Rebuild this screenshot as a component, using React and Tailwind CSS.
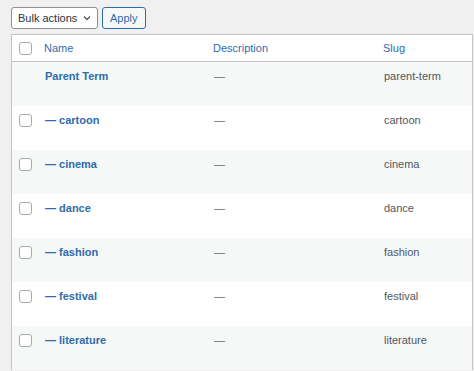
import React from "react";

const rows = [
  { name: "Parent Term", slug: "parent-term", parent: true },
  { name: "— cartoon", slug: "cartoon" },
  { name: "— cinema", slug: "cinema" },
  { name: "— dance", slug: "dance" },
  { name: "— fashion", slug: "fashion" },
  { name: "— festival", slug: "festival" },
  { name: "— literature", slug: "literature" },
];

function Checkbox() {
  return (
    <span className="block w-[13px] h-[13px] rounded-[3px] border border-[#a7aaad] bg-white" />
  );
}

export default function App() {
  return (
    <div
      className="w-[474px] h-[371px] overflow-hidden bg-[#f0f0f1] text-[11px] text-[#50575e]"
      style={{ fontFamily: '"Liberation Sans", Arial, sans-serif' }}
    >
      {/* bulk actions bar */}
      <div className="flex items-start gap-[4px] pl-[11px] pt-[7px] h-[34px]">
        <div className="flex items-center justify-between w-[87px] h-[22px] pl-[6px] pr-[6px] rounded-[3px] border border-[#8c8f94] bg-white text-[#2c3338]">
          <span>Bulk actions</span>
          <svg width="8" height="6" viewBox="0 0 8 6" fill="none">
            <path d="M1 1.5l3 3 3-3" stroke="#50575e" strokeWidth="1.3" />
          </svg>
        </div>
        <button className="h-[22px] px-[7px] rounded-[3px] border border-[#2f6cab] bg-[#f6f7f7] text-[#2f6cab]">
          Apply
        </button>
      </div>

      {/* table */}
      <div className="ml-[11px] w-[462px] border-t border-l border-r border-[#c3c4c7] bg-white">
        <div className="flex items-center h-[27px] border-b border-[#c3c4c7] text-[#2f6cab]">
          <div className="w-[32px] pl-[7px]">
            <Checkbox />
          </div>
          <div className="w-[169px]">Name</div>
          <div className="w-[170px]">Description</div>
          <div className="flex-1">Slug</div>
        </div>

        {rows.map((r, i) => (
          <div
            key={r.slug}
            className={`flex items-start h-[44px] pt-[7px] leading-[14px] ${
              i % 2 === 0 ? "bg-[#f6f7f7]" : "bg-white"
            }`}
          >
            <div className="w-[32px] pl-[7px] pt-[1px]">
              {!r.parent && <Checkbox />}
            </div>
            <div className="w-[169px] pl-[1px] font-bold text-[#2f6cab]">
              {r.name}
            </div>
            <div className="w-[170px] pl-[1px] text-[#646970]">—</div>
            <div className="flex-1 pl-[1px]">{r.slug}</div>
          </div>
        ))}
      </div>
    </div>
  );
}
